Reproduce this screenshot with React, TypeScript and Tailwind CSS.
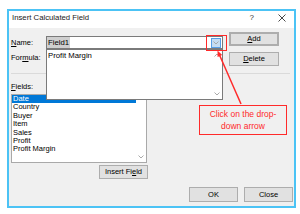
import React from 'react'

const font = { fontFamily: '"Liberation Sans", Arial, sans-serif' }

function Chevron({ up = false, className = '' }: { up?: boolean; className?: string }) {
  return (
    <svg width="6" height="4" viewBox="0 0 6 4" className={className}>
      <polyline
        points={up ? '0.5,3.5 3,1 5.5,3.5' : '0.5,0.5 3,3 5.5,0.5'}
        fill="none"
        stroke="#a0a0a0"
        strokeWidth="0.9"
      />
    </svg>
  )
}

function Btn({ children, className = '' }: { children: React.ReactNode; className?: string }) {
  return (
    <div
      className={`flex items-center justify-center bg-[#e1e1e1] border border-[#adadad] text-[7.5px] text-black ${className}`}
    >
      {children}
    </div>
  )
}

const fields = ['Date', 'Country', 'Buyer', 'Item', 'Sales', 'Profit', 'Profit Margin']

export default function App() {
  return (
    <div className="w-[300px] h-[214px] bg-white pt-[9px] pl-[7px] relative overflow-hidden" style={font}>
      <div className="w-[289px] h-[199px] border-2 border-[#4cc3f5] bg-[#f0f0f0] relative">
        {/* title bar */}
        <div className="h-[17px] bg-white flex items-start">
          <span className="pl-[3px] text-[7.75px] leading-[13px] text-[#1a1a1a]">Insert Calculated Field</span>
          <span className="ml-auto text-[8px] leading-[13px] text-[#333]">?</span>
          <svg width="8" height="8" viewBox="0 0 8 8" className="ml-[24px] mr-[8px] mt-[3px]">
            <path d="M0.5 0.5 L7.5 7.5 M7.5 0.5 L0.5 7.5" stroke="#333" strokeWidth="0.9" />
          </svg>
        </div>

        {/* body */}
        <div className="pl-[2px] pr-[1px]">
          <div className="flex">
            <div className="pt-[8px]">
              <div className="flex items-center">
                <span className="w-[35px] text-[7.5px] leading-[9px]">
                  <span className="underline">N</span>ame:
                </span>
                <div className="w-[177px] h-[13px] bg-white border border-[#7a7a7a] flex items-center">
                  <span className="bg-[#cfcfcf] text-[7.75px] leading-[11px] px-[1px]">Field1</span>
                  <div className="ml-auto mr-[1px] w-[10px] h-[10px] bg-[#c4dcf2] border border-[#569de5] flex items-center justify-center">
                    <Chevron />
                  </div>
                </div>
              </div>
              <div className="flex items-center mt-[2px]">
                <span className="w-[35px] text-[7.5px] leading-[9px]">
                  For<span className="underline">m</span>ula:
                </span>
                <div className="w-[177px] h-[13px] bg-white border border-[#7a7a7a]" />
              </div>
            </div>
            <div className="ml-[6px] pt-[4px] flex flex-col gap-[6px]">
              <Btn className="w-[50px] h-[14px] border-[#0078d7] border-2">
                <span className="underline">A</span>dd
              </Btn>
              <Btn className="w-[50px] h-[14px]">
                <span className="underline">D</span>elete
              </Btn>
            </div>
          </div>

          <div className="mt-[7px] h-px bg-[#dadada] mr-[3px]" />

          <div className="mt-[8px] text-[7.5px] leading-[9px]">
            <span className="underline">F</span>ields:
          </div>
          <div className="mt-[3px] w-[136px] h-[69px] bg-white border border-[#a9a9a9] flex">
            <div className="flex-1 text-[7.5px] leading-[8.4px]">
              {fields.map((f, i) => (
                <div key={f} className={i === 0 ? 'bg-[#0078d7] text-white pl-[1px]' : 'pl-[1px] text-black'}>
                  {f}
                </div>
              ))}
            </div>
            <div className="w-[10px] flex flex-col items-center justify-end pb-[3px]">
              <Chevron />
            </div>
          </div>
          <div className="flex mt-[2px]">
            <Btn className="ml-[88px] w-[49px] h-[14px]">
              Insert Fi<span className="underline">e</span>ld
            </Btn>
          </div>

          <div className="flex justify-end gap-[6px] mt-[8px]">
            <Btn className="w-[49px] h-[15px]">OK</Btn>
            <Btn className="w-[49px] h-[15px]">Close</Btn>
          </div>
        </div>

        {/* opened dropdown list */}
        <div className="absolute left-[37px] top-[38px] w-[177px] h-[51px] bg-white border border-[#7a7a7a] flex">
          <div className="flex-1 text-[7.75px] leading-[9px] pl-[1px] pt-px">Profit Margin</div>
          <div className="w-[10px] flex flex-col items-center justify-between py-[3px]">
            <Chevron up />
            <Chevron />
          </div>
        </div>

        {/* highlight round the drop-down button */}
        <div className="absolute left-[197px] top-[24px] w-[21px] h-[16px] border-[1.5px] border-[#ff2a2a]" />

        {/* callout */}
        <div className="absolute left-[190px] top-[94px] w-[88px] h-[30px] border-[1.5px] border-[#ff2a2a] bg-[#f0f0f0] flex flex-col items-center justify-center text-[8.5px] leading-[12px] text-[#ff2a2a]">
          <span>Click on the drop-</span>
          <span>down arrow</span>
        </div>
      </div>

      <svg className="absolute left-0 top-0 pointer-events-none" width="300" height="214" viewBox="0 0 300 214">
        <line x1="241" y1="104" x2="219.5" y2="55" stroke="#ff2a2a" strokeWidth="1.5" />
        <polygon points="217.5,50.5 222.2,55 217.6,57" fill="#ff2a2a" />
      </svg>
    </div>
  )
}
